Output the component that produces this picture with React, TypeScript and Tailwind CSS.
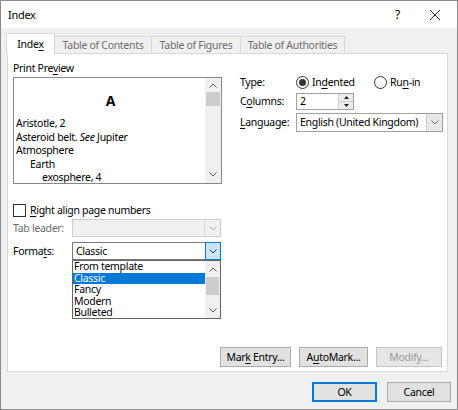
import type { ReactNode } from "react";

// Underlined access key letter, like Win32 dialog mnemonics
function Key({ children }: { children: ReactNode }) {
  return (
    <span className="underline decoration-1 underline-offset-[2px]">
      {children}
    </span>
  );
}

function ChevronDown({ className = "" }: { className?: string }) {
  return (
    <svg width="8" height="5" viewBox="0 0 8 5" className={className}>
      <path d="M0.5 0.5 L4 4 L7.5 0.5" fill="none" stroke="currentColor" strokeWidth="1" />
    </svg>
  );
}

function ChevronUp({ className = "" }: { className?: string }) {
  return (
    <svg width="8" height="5" viewBox="0 0 8 5" className={className}>
      <path d="M0.5 4.5 L4 1 L7.5 4.5" fill="none" stroke="currentColor" strokeWidth="1" />
    </svg>
  );
}

function Radio({ checked }: { checked?: boolean }) {
  return (
    <span className="w-[13px] h-[13px] rounded-full border border-[#333] bg-white flex items-center justify-center shrink-0">
      {checked && <span className="w-[7px] h-[7px] rounded-full bg-[#333]" />}
    </span>
  );
}

function Button({
  children,
  width,
  disabled,
  primary,
}: {
  children: ReactNode;
  width: string;
  disabled?: boolean;
  primary?: boolean;
}) {
  return (
    <div
      className={[
        "h-[20px] flex items-center justify-center border",
        width,
        disabled
          ? "bg-[#e6e6e6] border-[#c4c4c4] text-[#9a9a9a]"
          : primary
            ? "bg-[#e1e1e1] border-[#0078d7] shadow-[inset_0_0_0_1px_#0078d7]"
            : "bg-[#e1e1e1] border-[#adadad]",
      ].join(" ")}
    >
      <span className="whitespace-nowrap">{children}</span>
    </div>
  );
}

const previewLines = [
  { text: <>Aristotle, 2</>, indent: "pl-0" },
  { text: <>Asteroid belt. <i>See</i> Jupiter</>, indent: "pl-0" },
  { text: <>Atmosphere</>, indent: "pl-0" },
  { text: <>Earth</>, indent: "pl-[14px]" },
  { text: <>exosphere, 4</>, indent: "pl-[26px]" },
];

const formats = ["From template", "Classic", "Fancy", "Modern", "Bulleted"];

export default function App() {
  return (
    <div className="w-[458px] h-[410px] flex flex-col bg-[#f0f0f0] border border-[#8a8a8a] text-[10.5px] tracking-[-0.3px] leading-[15px] text-black font-['Noto_Sans','Open_Sans',sans-serif] overflow-hidden">
      {/* title bar */}
      <div className="h-[27px] shrink-0 bg-white flex items-center pl-[7px] pr-[16px]">
        <span className="text-[11px]">Index</span>
        <span className="ml-auto text-[12px]">?</span>
        <svg width="12" height="12" viewBox="0 0 12 12" className="ml-[29px]">
          <path d="M1 1 L11 11 M11 1 L1 11" stroke="#222" strokeWidth="1" />
        </svg>
      </div>

      {/* tabs */}
      <div className="flex items-end pl-[5px] mt-[5px] h-[20px] shrink-0">
        <div className="relative z-10 w-[49px] h-[21px] -mb-px bg-white border border-b-0 border-[#d9d9d9] flex items-center justify-center">
          <span>
            Inde<Key>x</Key>
          </span>
        </div>
        {[
          ["Table of Contents", "w-[97px]"],
          ["Table of Figures", "w-[89px]"],
          ["Table of Authorities", "w-[104px]"],
        ].map(([label, w]) => (
          <div
            key={label}
            className={`${w} h-[17px] border-t border-r border-[#d9d9d9] bg-[#f0f0f0] text-[#6d6d6d] flex items-center justify-center`}
          >
            {label}
          </div>
        ))}
      </div>

      {/* tab page */}
      <div className="ml-[6px] w-[441px] h-[319px] shrink-0 bg-white border border-[#d9d9d9] flex flex-col pl-[5px] pt-[7px]">
        <div className="flex">
          <div className="w-[209px] flex flex-col">
            <div className="h-[15px]">
              Print Pre<Key>v</Key>iew
            </div>
            <div className="mt-[1px] h-[107px] border border-[#828790] flex overflow-hidden">
              <div className="flex-1 pl-[2px] overflow-hidden">
                <div className="pt-[14px] h-[18px] box-content text-center font-bold text-[14px] leading-[18px] tracking-normal">
                  A
                </div>
                <div className="mt-[7px] leading-[13.5px]">
                  {previewLines.map((l, i) => (
                    <div key={i} className={`${l.indent} whitespace-nowrap`}>
                      {l.text}
                    </div>
                  ))}
                </div>
              </div>
              <div className="w-[16px] bg-[#f0f0f0] flex flex-col">
                <div className="h-[14px] flex items-center justify-center text-[#606060]">
                  <ChevronUp />
                </div>
                <div className="h-[14px] mx-[1px] bg-[#cdcdcd]" />
                <div className="flex-1" />
                <div className="h-[17px] flex items-center justify-center text-[#606060]">
                  <ChevronDown />
                </div>
              </div>
            </div>
          </div>

          <div className="ml-[18px] pt-[12px] flex flex-col">
            <div className="h-[18px] flex items-center">
              <span className="w-[56px]">Type:</span>
              <div className="w-[78px] flex items-center">
                <Radio checked />
                <span className="ml-[3px]">
                  In<Key>d</Key>ented
                </span>
              </div>
              <Radio />
              <span className="ml-[3px]">
                Ru<Key>n</Key>-in
              </span>
            </div>
            <div className="mt-[2px] h-[17px] flex items-center">
              <span className="w-[56px]">
                C<Key>o</Key>lumns:
              </span>
              <div className="w-[58px] h-[17px] border border-[#a0a0a0] bg-white flex">
                <span className="flex-1 pl-[3px] leading-[15px]">2</span>
                <div className="w-[15px] border-l border-[#d0d0d0] bg-[#ececec] flex flex-col">
                  <div className="flex-1 flex items-center justify-center border-b border-[#d0d0d0]">
                    <svg width="5" height="3" viewBox="0 0 5 3">
                      <path d="M0 3 L2.5 0 L5 3 Z" fill="#222" />
                    </svg>
                  </div>
                  <div className="flex-1 flex items-center justify-center">
                    <svg width="5" height="3" viewBox="0 0 5 3">
                      <path d="M0 0 L2.5 3 L5 0 Z" fill="#222" />
                    </svg>
                  </div>
                </div>
              </div>
            </div>
            <div className="mt-[3px] h-[19px] flex items-center">
              <span className="w-[56px]">
                <Key>L</Key>anguage:
              </span>
              <div className="w-[147px] h-[19px] border border-[#a0a0a0] bg-white flex">
                <span className="flex-1 pl-[3px] leading-[17px] whitespace-nowrap overflow-hidden">
                  English (United Kingdom)
                </span>
                <div className="w-[16px] border-l border-[#c8c8c8] bg-[#e8e8e8] flex items-center justify-center text-[#707070]">
                  <ChevronDown />
                </div>
              </div>
            </div>
          </div>
        </div>

        {/* page number options */}
        <div className="mt-[19px] h-[15px] flex items-center">
          <span className="w-[13px] h-[13px] border border-[#333] bg-white" />
          <span className="ml-[4px]">
            <Key>R</Key>ight align page numbers
          </span>
        </div>
        <div className="mt-[1px] h-[18px] flex items-center">
          <span className="w-[59px] text-[#6d6d6d]">Tab leader:</span>
          <div className="w-[149px] h-[18px] border border-[#cccccc] bg-[#f0f0f0] flex">
            <span className="flex-1" />
            <div className="w-[16px] border-l border-[#d8d8d8] flex items-center justify-center text-[#b0b0b0]">
              <ChevronDown />
            </div>
          </div>
        </div>
        <div className="mt-[5px] h-[18px] flex items-center">
          <span className="w-[59px]">
            Forma<Key>t</Key>s:
          </span>
          <div className="relative w-[149px] h-[18px] border border-[#7a7a7a] bg-white flex">
            <span className="flex-1 pl-[3px] leading-[16px]">Classic</span>
            <div className="w-[16px] -my-px -mr-px border border-[#0078d7] bg-[#cce4f7] flex items-center justify-center text-[#333]">
              <ChevronDown />
            </div>

            {/* open dropdown list */}
            <div className="absolute z-20 -left-px top-[17px] w-[149px] h-[59px] border border-[#646464] bg-white flex">
              <div className="flex-1 pl-[1px] leading-[11.5px] overflow-hidden">
                {formats.map((f) => (
                  <div
                    key={f}
                    className={
                      f === "Classic"
                        ? "-ml-[1px] pl-[1px] bg-[#0078d7] text-white"
                        : ""
                    }
                  >
                    {f}
                  </div>
                ))}
              </div>
              <div className="w-[15px] bg-[#f0f0f0] flex flex-col">
                <div className="h-[16px] flex items-center justify-center text-[#606060]">
                  <ChevronUp />
                </div>
                <div className="h-[18px] mx-[1px] bg-[#cdcdcd]" />
                <div className="flex-1" />
                <div className="h-[16px] flex items-center justify-center text-[#606060]">
                  <ChevronDown />
                </div>
              </div>
            </div>
          </div>
        </div>

        {/* entry buttons */}
        <div className="mt-auto mb-[4px] pr-[5px] flex justify-end gap-[8px]">
          <Button width="w-[71px]">
            Mar<Key>k</Key> Entry...
          </Button>
          <Button width="w-[69px]">
            A<Key>u</Key>toMark...
          </Button>
          <Button width="w-[66px]" disabled>
            Modify...
          </Button>
        </div>
      </div>

      {/* dialog buttons */}
      <div className="flex justify-end gap-[10px] pr-[6px] pt-[10px]">
        <Button width="w-[65px]" primary>
          OK
        </Button>
        <Button width="w-[64px]">Cancel</Button>
      </div>
    </div>
  );
}
